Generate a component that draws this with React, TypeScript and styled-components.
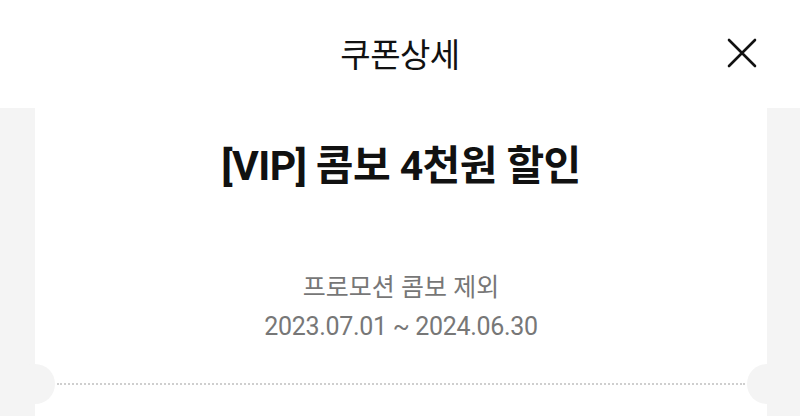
import React from 'react';
import styled, { createGlobalStyle } from 'styled-components';

const GlobalStyle = createGlobalStyle`
  html, body {
    margin: 0;
    padding: 0;
    background-color: #f4f4f4;
    font-family: Roboto, "Noto Sans CJK KR", sans-serif;
  }
`;

interface Coupon {
  title: string;
  condition: string;
  startDate: string;
  endDate: string;
}

const coupon: Coupon = {
  title: '[VIP] 콤보 4천원 할인',
  condition: '프로모션 콤보 제외',
  startDate: '2023.07.01',
  endDate: '2024.06.30',
};

function CloseIcon() {
  return (
    <svg width="30" height="30" viewBox="0 0 30 30" fill="none">
      <path d="M2 2L28 28M28 2L2 28" stroke="#111" strokeWidth="2.6" strokeLinecap="round" />
    </svg>
  );
}

function App() {
  return (
    <>
      <GlobalStyle />
      <Page>
        <Header>
          <div className="side" />
          <HeaderTitle>쿠폰상세</HeaderTitle>
          <div className="side close" role="button">
            <CloseIcon />
          </div>
        </Header>

        <Card>
          <CouponTitle>{coupon.title}</CouponTitle>
          <Condition>{coupon.condition}</Condition>
          <Period>
            {coupon.startDate} ~ {coupon.endDate}
          </Period>
          <Divider>
            <Notch $side="left" />
            <Notch $side="right" />
          </Divider>
        </Card>
      </Page>
    </>
  );
}

export default App;

const Page = styled.div`
  width: 800px;
  height: 416px;
  overflow: hidden;
  background-color: #f4f4f4;
`;

const Header = styled.header`
  height: 108px;
  background-color: #fff;
  display: flex;
  justify-content: space-between;
  align-items: center;
  padding-bottom: 2px;
  box-sizing: border-box;

  .side {
    width: 96px;
    height: 60px;
    display: flex;
    align-items: center;
  }

  .close {
    justify-content: flex-start;
    padding-left: 23px;
    box-sizing: border-box;
    cursor: pointer;
  }
`;

const HeaderTitle = styled.h1`
  margin: 0;
  font-size: 33px;
  font-weight: 400;
  color: #111;
  letter-spacing: -0.5px;
`;

const Card = styled.section`
  position: relative;
  margin-left: 35px;
  width: 732px;
  height: 320px;
  background-color: #fff;
  display: flex;
  flex-direction: column;
  align-items: center;
  padding-top: 35px;
  box-sizing: border-box;
`;

const CouponTitle = styled.h2`
  margin: 0;
  font-size: 41px;
  line-height: 46px;
  font-weight: 700;
  color: #111;
  letter-spacing: -0.6px;
`;

const Condition = styled.p`
  margin: 82px 0 0;
  font-size: 25px;
  line-height: 34px;
  color: #777;
`;

const Period = styled.p`
  margin: 5px 0 0;
  font-size: 25px;
  line-height: 34px;
  color: #777;
  letter-spacing: -0.3px;
`;

const Divider = styled.div`
  position: absolute;
  top: 275px;
  left: 22px;
  right: 22px;
  border-top: 2px dotted #cfcfcf;
`;

const Notch = styled.span<{ $side: 'left' | 'right' }>`
  position: absolute;
  top: -21px;
  ${({ $side }) => ($side === 'left' ? 'left: -42px;' : 'right: -42px;')}
  width: 40px;
  height: 40px;
  border-radius: 50%;
  background-color: #f4f4f4;
`;
